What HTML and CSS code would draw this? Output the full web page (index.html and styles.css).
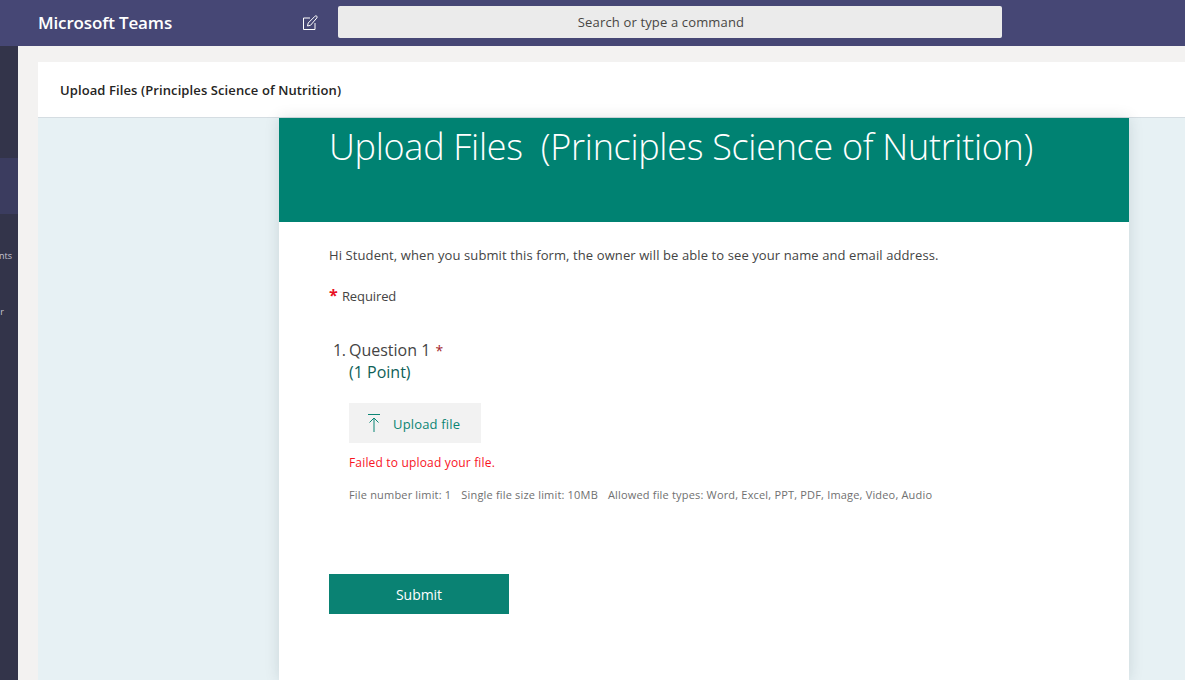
FILE: index.html
```html
<!DOCTYPE html>
<html lang="en">
<head>
<meta charset="utf-8">
<title>Microsoft Teams</title>
<link rel="stylesheet" href="styles.css">
</head>
<body>
<header class="topbar">
  <div class="brand">Microsoft Teams</div>
  <button class="compose" aria-label="New chat">
    <svg width="16" height="16" viewBox="0 0 16 16" fill="none" stroke="#fff" stroke-width="1">
      <path d="M8 3H1.500v11.500H13V8"/>
      <path d="M5.500 11l.7-3L13 1.200c.6-.5 1.300-.5 1.800 0s.5 1.200 0 1.800L8.500 10.300z"/>
    </svg>
  </button>
  <div class="search">Search or type a command</div>
</header>
<div class="app">
  <nav class="rail">
    <div class="rail-item rail-first"></div>
    <div class="rail-item rail-active"></div>
    <div class="rail-item"><span class="rail-label">nts</span></div>
    <div class="rail-item rail-short"><span class="rail-label">r</span></div>
  </nav>
  <main class="main">
    <div class="tabbar">Upload Files (Principles Science of Nutrition)</div>
    <div class="canvas">
      <section class="card">
        <div class="banner">Upload Files&nbsp; (Principles Science of Nutrition)</div>
        <div class="form">
          <p class="intro">Hi Student, when you submit this form, the owner will be able to see your name and email address.</p>
          <p class="required"><span class="req-star">*</span> Required</p>
          <div class="question">
            <span class="q-num">1.</span>
            <div class="q-body">
              <div class="q-title">Question 1 <span class="q-star">*</span></div>
              <div class="q-points">(1 Point)</div>
              <button class="upload">
                <svg width="12" height="18" viewBox="0 0 12 18" fill="none" stroke="#0b8574" stroke-width="1">
                  <path d="M0 .5h12M6 18V4M1.500 8.500L6 4l4.500 4.500"/>
                </svg>
                <span class="upload-label">Upload file</span>
              </button>
              <div class="error">Failed to upload your file.</div>
              <div class="limits"><span>File number limit: 1</span><span>Single file size limit: 10MB</span><span>Allowed file types: Word, Excel, PPT, PDF, Image, Video, Audio</span></div>
            </div>
          </div>
          <button class="submit">Submit</button>
        </div>
      </section>
    </div>
  </main>
</div>
</body>
</html>
```

FILE: styles.css
```css
* { box-sizing: border-box; }
html, body { margin: 0; height: 100%; overflow: hidden; }
body {
  width: 1185px;
  height: 680px;
  display: flex;
  flex-direction: column;
  font-family: "Open Sans", "Noto Sans", sans-serif;
  background: #f3f2f1;
  color: #323130;
}
button { font-family: inherit; border: 0; padding: 0; }

.topbar {
  flex: 0 0 46px;
  display: flex;
  align-items: center;
  background: #464775;
}
.brand {
  width: 302px;
  padding: 0 0 2px 38px;
  color: #fff;
  font-size: 17px;
  font-weight: 600;
  letter-spacing: -0.15px;
  white-space: nowrap;
}
.compose {
  width: 16px;
  height: 16px;
  background: none;
  display: flex;
}
.search {
  width: 664px;
  height: 32px;
  margin: -2px 0 0 20px;
  padding-right: 18px;
  border-radius: 2px;
  background: #ebebeb;
  color: #484644;
  font-size: 13px;
  line-height: 32px;
  text-align: center;
  letter-spacing: 0.15px;
}

.app { flex: 1; display: flex; min-height: 0; }
.rail {
  flex: 0 0 18px;
  background: #33344a;
  overflow: hidden;
  display: flex;
  flex-direction: column;
}
.rail-item {
  flex: 0 0 56px;
  display: flex;
  justify-content: flex-end;
  align-items: center;
  padding: 26px 6px 0 0;
}
.rail-first { flex-basis: 112px; }
.rail-active { background: #3b3c5f; }
.rail-short { padding-right: 14px; }
.rail-label {
  color: #c8c6d4;
  font-size: 9px;
  white-space: nowrap;
}

.main {
  flex: 1;
  min-width: 0;
  padding: 16px 0 0 20px;
  display: flex;
  flex-direction: column;
}
.tabbar {
  flex: 0 0 56px;
  padding: 1px 0 0 22px;
  background: #fff;
  border-bottom: 1px solid #d5dde2;
  color: #252423;
  font-size: 13px;
  font-weight: 600;
  line-height: 54px;
  letter-spacing: 0.1px;
}
.canvas {
  flex: 1;
  min-height: 0;
  padding-left: 241px;
  padding-right: 56px;
  background: #e7f1f4;
}
.card {
  width: 850px;
  height: 100%;
  background: #fff;
  box-shadow: 0 0 14px rgba(0, 40, 50, .13);
}
.banner {
  height: 104px;
  padding: 4px 0 0 50px;
  background: #008272;
  color: #fff;
  font-size: 36px;
  font-weight: 300;
  line-height: 50px;
  letter-spacing: -0.3px;
  white-space: nowrap;
}
.form { padding: 24px 50px 0; }
.intro {
  margin: 0;
  font-size: 13px;
  line-height: 18px;
  color: #444;
  letter-spacing: 0.1px;
}
.required {
  margin: 22px 0 0;
  font-size: 13px;
  line-height: 18px;
  color: #444;
  letter-spacing: -0.1px;
}
.req-star { color: #e81123; font-size: 16px; font-weight: 700; margin-right: 1px; }
.question { display: flex; margin-top: 34px; }
.q-num { width: 20px; padding-left: 4px; font-size: 16px; line-height: 22px; color: #444; letter-spacing: -0.3px; }
.q-body { flex: 1; }
.q-title { height: 22px; font-size: 16px; line-height: 22px; color: #444; }
.q-star { color: #a4262c; font-size: 14px; line-height: 1; margin-left: 1px; }
.q-points { font-size: 16px; line-height: 22px; color: #0f5f58; }
.upload {
  width: 132px;
  height: 40px;
  margin-top: 20px;
  padding-left: 19px;
  display: flex;
  align-items: center;
  gap: 13px;
  background: #f2f2f2;
  color: #0b8574;
  font-size: 13px;
  letter-spacing: 0.17px;
}
.upload-label { padding-top: 2px; }
.error {
  margin-top: 11px;
  font-size: 12px;
  line-height: 18px;
  color: #f8141f;
  letter-spacing: 0.17px;
}
.limits {
  display: flex;
  gap: 10px;
  margin-top: 15px;
  font-size: 11px;
  line-height: 16px;
  color: #707070;
  letter-spacing: 0.18px;
  white-space: nowrap;
}
.submit {
  display: block;
  width: 180px;
  height: 40px;
  margin-top: 71px;
  background: #0a8273;
  color: #fff;
  font-size: 14px;
  font-weight: 500;
  letter-spacing: -0.05px;
}
```
